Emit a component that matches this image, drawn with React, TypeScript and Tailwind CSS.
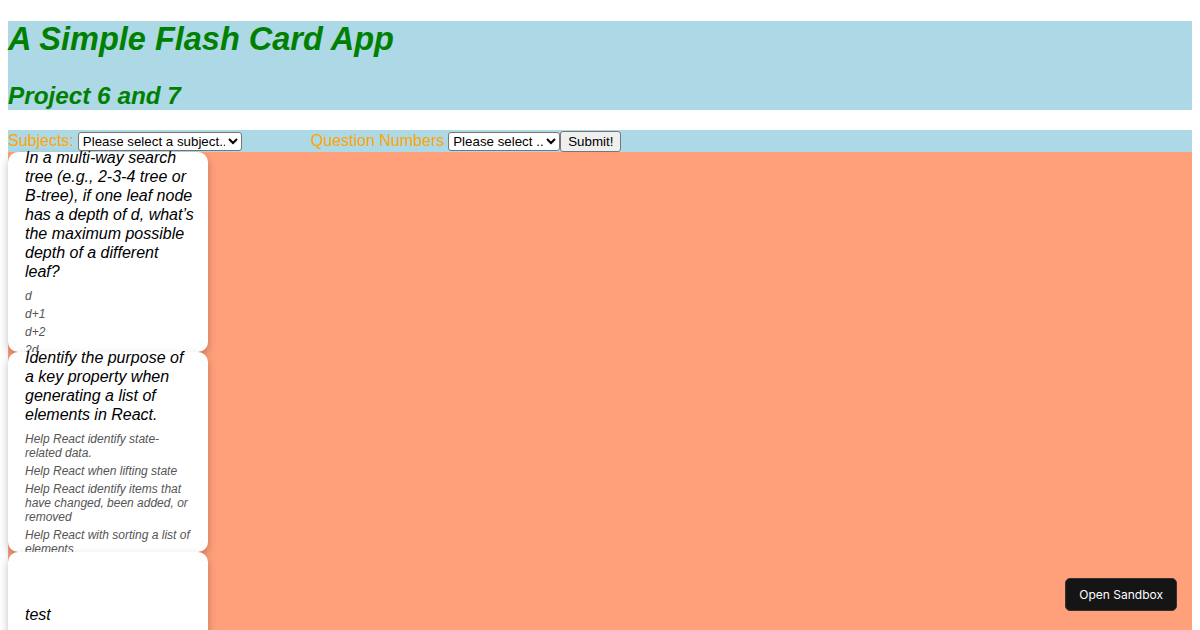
type Card = {
  question: string;
  answers: string[];
};

const cards: Card[] = [
  {
    question:
      "In a multi-way search tree (e.g., 2-3-4 tree or B-tree), if one leaf node has a depth of d, what’s the maximum possible depth of a different leaf?",
    answers: ["d", "d+1", "d+2", "2d"],
  },
  {
    question:
      "Identify the purpose of a key property when generating a list of elements in React.",
    answers: [
      "Help React identify state-related data.",
      "Help React when lifting state",
      "Help React identify items that have changed, been added, or removed",
      "Help React with sorting a list of elements",
    ],
  },
  {
    question: "test",
    answers: ["", "", "", ""],
  },
];

const FlashCard = ({ card }: { card: Card }) => {
  return (
    <div className="relative flex h-[200px] w-[200px] flex-col justify-center rounded-[10px] bg-white pr-[13px] pl-[17px] shadow-[0_4px_8px_0_rgba(0,0,0,0.25)]">
      <p className="mb-2 text-[16px] leading-[19px] italic text-black">
        {card.question}
      </p>
      <ul>
        {card.answers.map((a, i) => (
          <li
            key={i}
            className="mb-1 min-h-[14px] text-[12px] leading-[14px] italic text-[#555] last:mb-0"
          >
            {a}
          </li>
        ))}
      </ul>
    </div>
  );
};

export default function App() {
  return (
    <div className="min-h-screen bg-white px-2 pt-[21px] font-['Liberation_Sans',Arial,sans-serif]">
      <header className="bg-[#add8e6]">
        <h1 className="text-[32.5px] leading-[37px] font-bold italic text-[#008000]">
          A Simple Flash Card App
        </h1>
        <h2 className="mt-[24px] text-[24.3px] leading-[28px] font-bold italic text-[#008000]">
          Project 6 and 7
        </h2>
      </header>

      <nav className="mt-[20px] flex h-[22px] items-center bg-[#add8e6] text-[16px] text-[#ffa500]">
        <label className="flex items-center">
          <span>Subjects:</span>
          <select className="ml-[4px] h-[19px] w-[164px] rounded-[3px] border border-[#767676] bg-white text-[13.33px] text-black">
            <option>Please select a subject...</option>
          </select>
        </label>
        <label className="ml-[69px] flex items-center">
          <span>Question Numbers</span>
          <select className="ml-[4px] h-[19px] w-[112px] rounded-[3px] border border-[#767676] bg-white text-[13.33px] text-black">
            <option>Please select ...</option>
          </select>
        </label>
        <button className="h-[21px] rounded-[3px] border border-[#767676] bg-[#efefef] px-[7px] text-[13.33px] leading-[15px] text-black">
          Submit!
        </button>
      </nav>

      <section className="flex min-h-[478px] flex-col bg-[#ffa07a]">
        {cards.map((c, i) => (
          <FlashCard key={i} card={c} />
        ))}
      </section>

      <button className="fixed right-[23px] bottom-[19px] h-[33px] rounded-[5px] border border-[#333] bg-[#151515] px-[13px] font-['Inter',sans-serif] text-[12px] text-white">
        Open Sandbox
      </button>
    </div>
  );
}
